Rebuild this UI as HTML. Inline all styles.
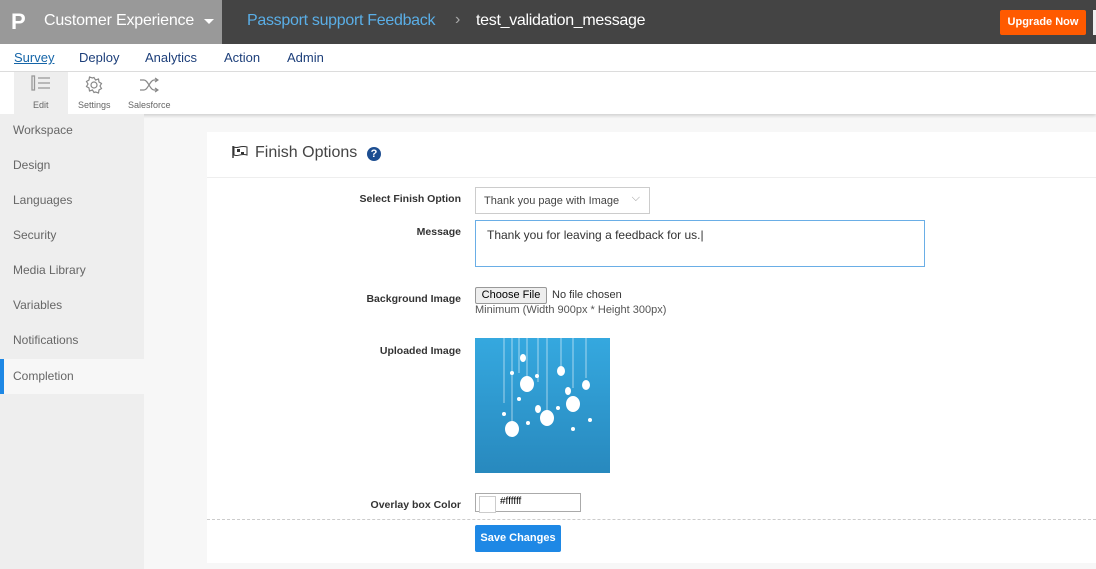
<!DOCTYPE html><html><head><style>
*{box-sizing:border-box;margin:0;padding:0}
body{width:1096px;height:569px;overflow:hidden;font-family:"Liberation Sans",sans-serif;background:#f7f7f7;position:relative}
.a{position:absolute}
.lbl{position:absolute;right:635px;font-size:10.5px;font-weight:bold;color:#333;text-align:right}
</style></head><body>
<div class="a" style="left:0;top:0;width:222px;height:44px;background:#999"></div>
<div class="a" style="left:222px;top:0;width:874px;height:44px;background:#444"></div>
<div class="a" style="left:11px;top:9px;color:#fff;font-size:22px;font-weight:bold">P</div>
<div class="a" style="left:44px;top:12px;color:#fff;font-size:16px;letter-spacing:-0.2px">Customer Experience</div>
<div class="a" style="left:204px;top:19px;border:5px solid transparent;border-top:5px solid #fff"></div>
<div class="a" style="left:247px;top:12px;color:#5aaee6;font-size:16px;letter-spacing:-0.3px">Passport support Feedback</div>
<div class="a" style="left:455px;top:11px;color:#aaa;font-size:16px">›</div>
<div class="a" style="left:476px;top:12px;color:#fff;font-size:16px;letter-spacing:-0.3px">test_validation_message</div>
<div class="a" style="left:1000px;top:10px;width:86px;height:25px;background:#ff5a00;border-radius:2px;color:#fff;font-size:11px;font-weight:bold;text-align:center;line-height:25px">Upgrade Now</div>
<div class="a" style="left:1093px;top:10px;width:3px;height:25px;background:#eee"></div>
<div class="a" style="left:0;top:44px;width:1096px;height:28px;background:#fff;border-bottom:1px solid #ddd"></div>
<div class="a" style="left:14px;top:50px;font-size:13px;color:#1565a8;text-decoration:underline">Survey</div>
<div class="a" style="left:79px;top:50px;font-size:13px;color:#1d3f7a">Deploy</div>
<div class="a" style="left:145px;top:50px;font-size:13px;color:#1d3f7a">Analytics</div>
<div class="a" style="left:224px;top:50px;font-size:13px;color:#1d3f7a">Action</div>
<div class="a" style="left:287px;top:50px;font-size:13px;color:#1d3f7a">Admin</div>
<div class="a" style="left:0;top:72px;width:1096px;height:42px;background:#fff;box-shadow:0 2px 3px rgba(0,0,0,.15)"></div>
<div class="a" style="left:14px;top:72px;width:54px;height:42px;background:#eee"></div>
<svg class="a" style="left:30px;top:75px" width="22" height="18" fill="none" stroke="#999" stroke-width="1.3"><rect x="2" y="1" width="2.5" height="14"/><path d="M8 3h12M8 8h12M8 13h12"/></svg>
<div class="a" style="left:33px;top:100px;font-size:9px;color:#666">Edit</div>
<svg class="a" style="left:85px;top:76px" width="18" height="18" fill="none" stroke="#888" stroke-width="1.2"><circle cx="9" cy="9" r="3"/><path d="M9 1.5l1.5 2.5 3-1 .5 3 2.5 1.5-1.5 2.5 1.5 2.5-2.5 1.5-.5 3-3-1L9 16.5 7.5 14l-3 1-.5-3L1.5 10.5 3 8 1.5 5.5 4 4l.5-3 3 1z"/></svg>
<div class="a" style="left:78px;top:100px;font-size:9px;color:#666">Settings</div>
<svg class="a" style="left:139px;top:77px" width="20" height="16" fill="none" stroke="#888" stroke-width="1.2"><path d="M1 3h4c4 0 6 10 10 10h3M1 13h4c4 0 6-10 10-10h3M16 1l3 2-3 2M16 11l3 2-3 2"/></svg>
<div class="a" style="left:128px;top:100px;font-size:9px;color:#666">Salesforce</div>
<div class="a" style="left:0;top:114px;width:144px;height:455px;background:#eee"></div>
<div class="a" style="left:13px;top:113px;font-size:12px;color:#666;line-height:35px">Workspace<br>Design<br>Languages<br>Security<br>Media Library<br>Variables<br>Notifications</div>
<div class="a" style="left:0;top:359px;width:144px;height:35px;background:#f7f7f7;border-left:4px solid #1e88e5"></div>
<div class="a" style="left:13px;top:369px;font-size:12px;color:#666">Completion</div>
<div class="a" style="left:207px;top:132px;width:889px;height:431px;background:#fff"></div>
<div class="a" style="left:207px;top:177px;width:889px;height:1px;background:#eee"></div>
<svg class="a" style="left:232px;top:146px" width="16" height="12"><path d="M1 0v12" stroke="#333" stroke-width="1.4"/><path d="M2 1c4 2 6-2 13 0v8c-6-2-9 2-13 0z" fill="#fff" stroke="#333"/><path d="M5 3h3v3H5zM9 6h3v2H9z" fill="#333"/></svg>
<div class="a" style="left:255px;top:144px;font-size:16px;color:#444">Finish Options</div>
<div class="a" style="left:367px;top:147px;width:14px;height:14px;border-radius:50%;background:#1d4e91;color:#fff;font-size:11px;font-weight:bold;text-align:center;line-height:14px">?</div>
<div class="lbl" style="top:193px">Select Finish Option</div>
<div class="a" style="left:475px;top:187px;width:175px;height:27px;border:1px solid #ccc;font-size:11px;color:#444;padding:7px 8px">Thank you page with Image<span style="position:absolute;right:9px;top:4px;color:#999">⌵</span></div>
<div class="lbl" style="top:226px">Message</div>
<div class="a" style="left:475px;top:220px;width:450px;height:47px;border:1px solid #6aaee6;font-size:12px;color:#333;padding:7px 11px">Thank you for leaving a feedback for us.|</div>
<div class="lbl" style="top:293px">Background Image</div>
<div class="a" style="left:475px;top:287px;width:72px;height:17px;border:1px solid #999;background:#eee;font-size:11px;text-align:center;line-height:15px;border-radius:2px">Choose File</div>
<div class="a" style="left:552px;top:289px;font-size:11px;color:#333">No file chosen</div>
<div class="a" style="left:475px;top:304px;font-size:11px;color:#555">Minimum (Width 900px * Height 300px)</div>
<div class="lbl" style="top:345px">Uploaded Image</div>
<svg class="a" style="left:475px;top:338px" width="135" height="135"><defs><linearGradient id="g" x1="0" y1="0" x2="0" y2="1"><stop offset="0" stop-color="#35a8df"/><stop offset="1" stop-color="#2889be"/></linearGradient></defs><rect width="135" height="135" fill="url(#g)"/><g stroke="#fff" stroke-width=".7" opacity=".8"><path d="M37 0v85M52 0v38M72 0v73M63 0v44M86 0v30M98 0v50M111 0v40M29 0v65M44 0v35"/></g><g fill="#fff"><ellipse cx="37" cy="91" rx="7" ry="8"/><ellipse cx="52" cy="46" rx="7" ry="8"/><ellipse cx="72" cy="80" rx="7" ry="8"/><ellipse cx="98" cy="66" rx="7" ry="8"/><ellipse cx="111" cy="47" rx="4" ry="5"/><ellipse cx="86" cy="33" rx="4" ry="5"/><ellipse cx="63" cy="71" rx="3" ry="4"/><ellipse cx="93" cy="53" rx="3" ry="4"/><ellipse cx="48" cy="20" rx="3" ry="4"/><circle cx="29" cy="76" r="2"/><circle cx="37" cy="35" r="2"/><circle cx="44" cy="61" r="2"/><circle cx="53" cy="85" r="2"/><circle cx="62" cy="38" r="2"/><circle cx="83" cy="70" r="2"/><circle cx="98" cy="91" r="2"/><circle cx="115" cy="82" r="2"/></g></svg>
<div class="lbl" style="top:499px">Overlay box Color</div>
<div class="a" style="left:475px;top:493px;width:106px;height:19px;border:1px solid #aaa;font-size:10px;padding:2px 0 0 24px">#ffffff</div>
<div class="a" style="left:479px;top:496px;width:17px;height:17px;border:1px solid #ccc;background:#fff"></div>
<div class="a" style="left:207px;top:519px;width:889px;border-top:1px dashed #ccc"></div>
<div class="a" style="left:475px;top:525px;width:86px;height:27px;background:#1e88e5;border-radius:2px;color:#fff;font-size:11px;font-weight:bold;text-align:center;line-height:27px">Save Changes</div>
</body></html>
